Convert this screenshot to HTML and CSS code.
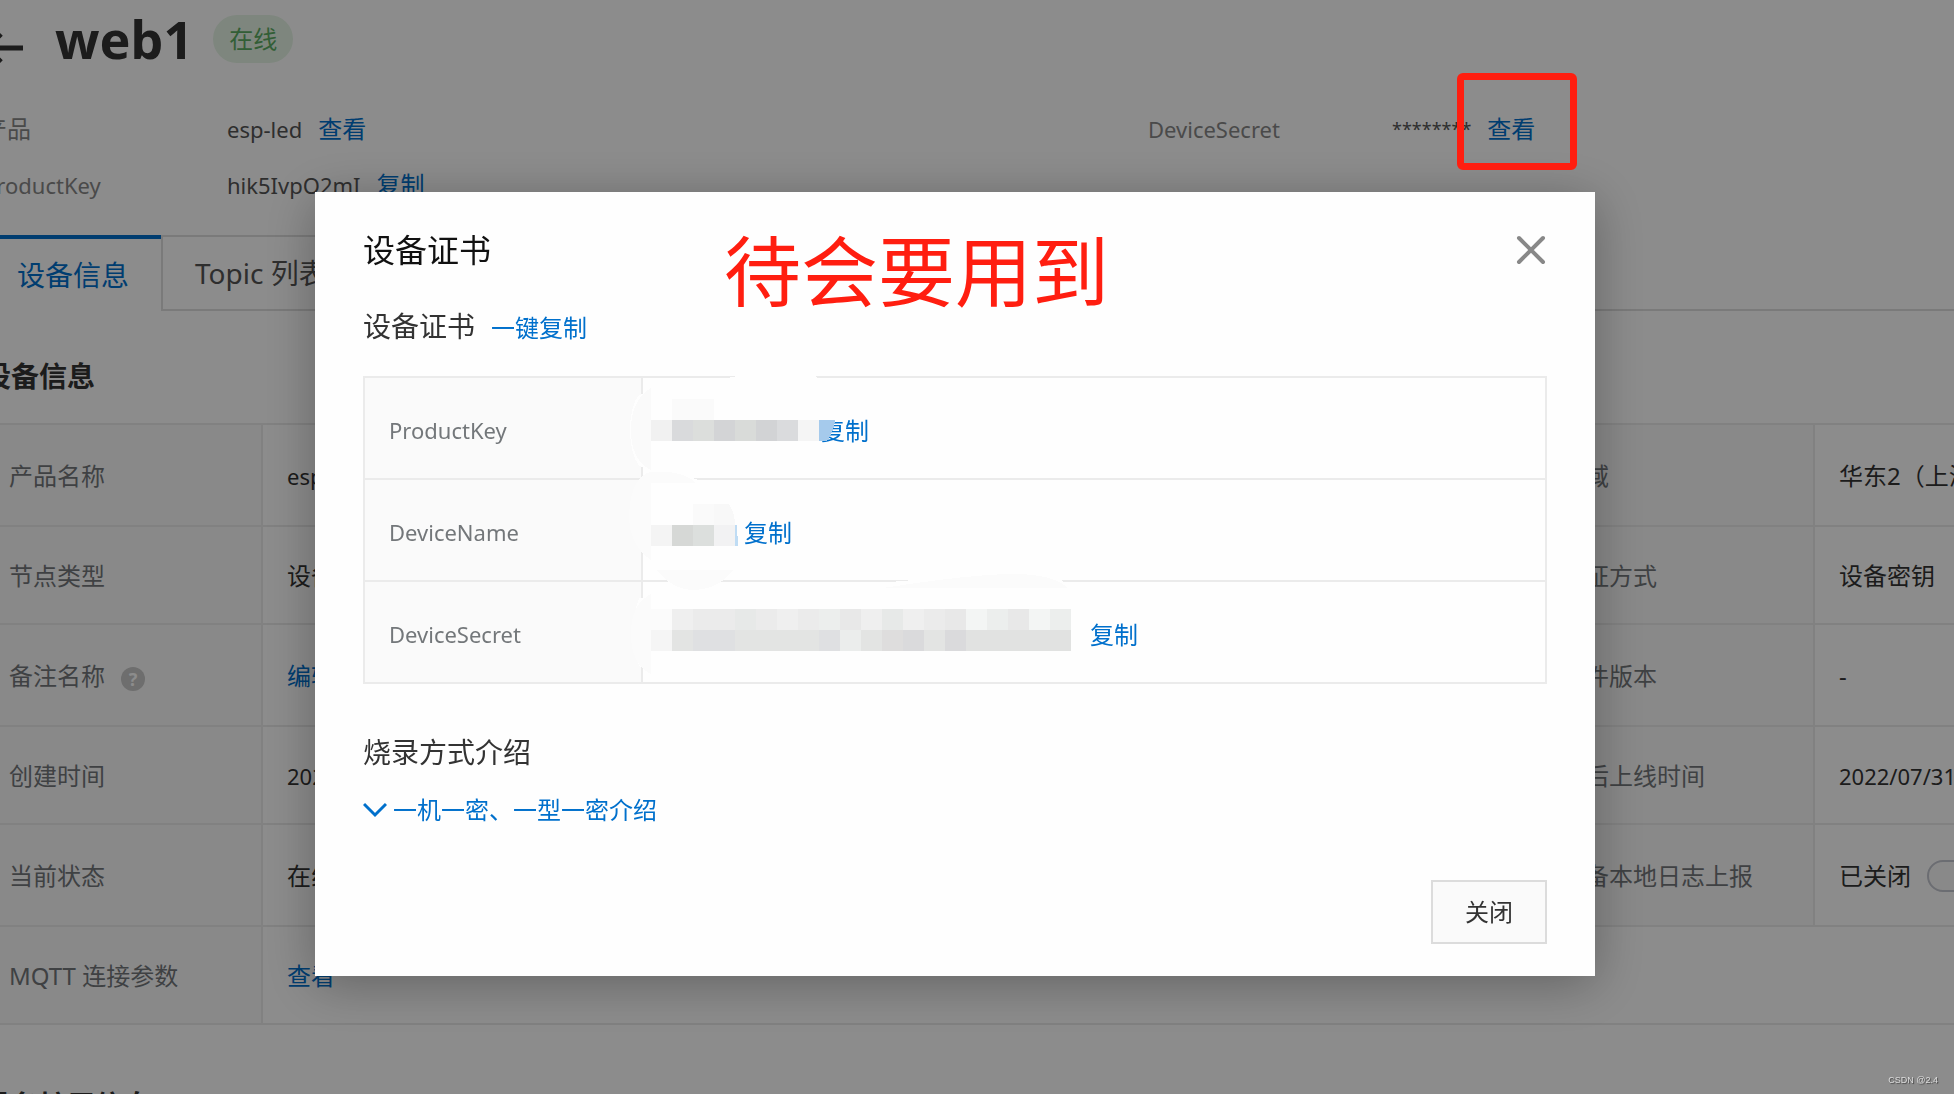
FILE: index.html
```html
<!DOCTYPE html>
<html lang="zh-CN">
<head>
  <meta charset="UTF-8">
  <title>设备详情 - web1</title>
  <link rel="stylesheet" href="styles.css">
</head>
<body>
  <div class="page">
    <div class="page-header">
      <button class="back" aria-label="返回">
        <svg width="40" height="40" viewBox="0 0 40 40" fill="none" stroke="#333" stroke-width="5"><path d="M40 20H5M18 6L4 20l14 14"/></svg>
      </button>
      <h1>web1</h1>
      <span class="badge">在线</span>
    </div>

    <div class="info">
      <div class="info-item"><span class="info-label">产品</span><span class="en">esp-led</span><a href="#">查看</a></div>
      <div class="info-item"><span class="info-label en">DeviceSecret</span><span class="secret">********</span><a href="#">查看</a></div>
      <div class="info-item"><span class="info-label en">ProductKey</span><span class="en">hik5IvpO2mI</span><a href="#">复制</a></div>
    </div>

    <div class="tabs">
      <button class="tab active">设备信息</button>
      <button class="tab">Topic 列表</button>
      <div class="tabs-line"></div>
    </div>

    <h2>设备信息</h2>
    <table class="detail">
      <tr>
        <th>产品名称</th><td class="en">esp-led</td>
        <th></th><td></td>
        <th>地域</th><td>华东2（上海）</td>
      </tr>
      <tr>
        <th>节点类型</th><td>设备</td>
        <th></th><td></td>
        <th>认证方式</th><td>设备密钥</td>
      </tr>
      <tr>
        <th>备注名称<span class="help">?</span></th><td><a href="#">编辑</a></td>
        <th></th><td></td>
        <th>固件版本</th><td>-</td>
      </tr>
      <tr>
        <th>创建时间</th><td class="en">2022/07/31</td>
        <th></th><td></td>
        <th>最后上线时间</th><td class="en">2022/07/31</td>
      </tr>
      <tr>
        <th>当前状态</th><td>在线</td>
        <th></th><td></td>
        <th>设备本地日志上报</th><td><label class="switch">已关闭<input type="checkbox"></label></td>
      </tr>
      <tr>
        <th>MQTT 连接参数</th><td colspan="5"><a href="#">查看</a></td>
      </tr>
    </table>

    <h2 class="next">设备扩展信息</h2>
  </div>

  <div class="overlay">
    <div class="dialog" role="dialog" aria-label="设备证书">
      <div class="dialog-header">
        <div class="dialog-title">设备证书</div>
        <button class="close" aria-label="关闭窗口">
          <svg width="32" height="32" viewBox="0 0 32 32" fill="none" stroke="#888" stroke-width="4" stroke-linecap="round"><path d="M4 4l24 24M28 4L4 28"/></svg>
        </button>
      </div>

      <div class="subtitle">设备证书<a href="#">一键复制</a></div>
      <table class="cert">
        <tr>
          <th class="en">ProductKey</th>
          <td><div class="cell">
            <svg class="mosaic" width="178" height="100" viewBox="0 0 178 100" shape-rendering="crispEdges">
              <path fill="#fefefe" d="M-4 17C-16 30-16 72-4 88L8 91Q60 90 150 76L178 60 192 30 173-2Q150-10 112-5L95-2Q50 6-4 17z"/>
              <path fill="#fafafa" d="M8 10Q-12 22-12 52T8 92zM29 21h42v21H29z"/>
              <path fill="#f1f1f1" d="M8 42h21v21H8z"/>
              <path fill="#d9dadc" d="M29 42h21v21H29z"/>
              <path fill="#dcdedc" d="M50 42h21v21H50z"/>
              <path fill="#d3d4d6" d="M71 42h21v21H71z"/>
              <path fill="#d9dbd9" d="M92 42h21v21H92z"/>
              <path fill="#d2d3d5" d="M113 42h21v21h-21z"/>
              <path fill="#dadbdd" d="M134 42h21v21h-21z"/>
              <path fill="#f5f5f5" d="M155 42h21v21h-21z"/>
              <path fill="#a5caec" d="M176 42h16q-1 12-8 21h-8z"/>
            </svg>
            <a href="#">复制</a>
          </div></td>
        </tr>
        <tr>
          <th class="en">DeviceName</th>
          <td><div class="cell">
            <svg class="mosaic" width="101" height="100" viewBox="0 0 101 100" shape-rendering="crispEdges">
              <path fill="#fefefe" d="M8-8Q-10-2-12 30T8 82Q20 104 45 110Q70 108 84 80L94 60Q94 30 84 20Q60-8 8-8z"/>
              <path fill="#fbfbfb" d="M8-8Q-12-4-14 35Q-14 65 8 80zM8-8Q40-10 53 3H8zM14 90h76Q76 110 48 110 28 108 14 90z"/>
              <path fill="#fafafa" d="M50 24h21v21H50z"/>
              <path fill="#f8f8f8" d="M71 24h15q6 9 6 21H71z"/>
              <path fill="#f4f4f4" d="M8 45h21v21H8z"/>
              <path fill="#d6d8d6" d="M29 45h21v21H29z"/>
              <path fill="#dcdfdd" d="M50 45h21v21H50z"/>
              <path fill="#f2f2f3" d="M71 45h21v21H71z"/>
              <path fill="#bfdcf4" d="M92 45h2l1 21h-3z"/>
            </svg>
            <a href="#">复制</a>
          </div></td>
        </tr>
        <tr>
          <th class="en">DeviceSecret</th>
          <td><div class="cell">
            <svg class="mosaic" width="447" height="100" viewBox="0 0 447 100" shape-rendering="crispEdges">
              <path fill="#fefefe" d="M-4 16Q-16 50-4 84L10 92Q200 90 420 78Q444 62 440 30Q436 14 418-2Q380-8 330-8Q260 0 200 3z"/>
              <path fill="#fbfbfb" d="M8 12Q-12 22-12 52T8 92zM240 6Q330-8 370-8T425 6z"/>
              <g transform="translate(8 27)">
                <path fill="#fbfbfb" d="M0 0h21v21H0z"/>
                <path fill="#f5f5f5" d="M0 21h21v21H0z"/>
                <path fill="#ebebeb" d="M21 0h378v21H21z"/>
                <path fill="#e3e4e3" d="M21 21h378v21H21z"/>
                <path fill="#efefef" d="M21 0h21v21H21zM126 0h21v21h-21zM210 0h21v21h-21zM252 0h21v21h-21z"/>
                <path fill="#e7e9e8" d="M84 0h21v21H84zM231 0h21v21h-21z"/>
                <path fill="#e8e8e8" d="M189 0h21v21h-21zM294 0h21v21h-21zM357 0h21v21h-21z"/>
                <path fill="#f3f5f4" d="M315 0h21v21h-21zM378 0h21v21h-21z"/>
                <path fill="#eceeed" d="M399 0h21v21h-21zM168 0h21v21h-21zM336 0h21v21h-21z"/>
                <path fill="#dfe0e2" d="M42 21h42v21H42zM168 21h21v21h-21z"/>
                <path fill="#ebedec" d="M189 21h21v21h-21z"/>
                <path fill="#dedddd" d="M231 21h21v21h-21z"/>
                <path fill="#dadadc" d="M252 21h21v21h-21zM294 21h21v21h-21z"/>
                <path fill="#e1e2e1" d="M315 21h105v21H315z"/>
              </g>
            </svg>
            <a href="#">复制</a>
          </div></td>
        </tr>
      </table>

      <div class="subtitle intro">烧录方式介绍</div>
      <a class="expand" href="#">
        <svg width="24" height="24" viewBox="0 0 24 24" fill="none" stroke="#0070cc" stroke-width="3"><path d="M1 6l11 11L23 6"/></svg>
        一机一密、一型一密介绍
      </a>

      <div class="dialog-footer">
        <button class="btn">关闭</button>
      </div>
    </div>
  </div>

  <div class="mark-box"></div>
  <div class="mark-text">待会要用到</div>
  <div class="watermark">CSDN @2.4</div>
</body>
</html>
```
FILE: styles.css
```css
* {
  box-sizing: border-box;
}
body {
  margin: 0;
  height: 100vh;
  position: relative;
  overflow: hidden;
  background: #fff;
  color: #333;
  font-family: "Noto Sans", "Noto Sans CJK SC", sans-serif;
  font-size: 24px;
  line-height: 36px;
}
a {
  color: #0070cc;
  text-decoration: none;
}
button {
  font-family: inherit;
  font-size: inherit;
  line-height: inherit;
  color: inherit;
  cursor: pointer;
}
.en {
  font-size: 22px;
}

/* page */
.page {
  min-width: 2330px;
  margin-left: -17px;
}
.page-header {
  display: flex;
  align-items: center;
  height: 78px;
}
.back {
  display: flex;
  padding: 18px 0 0;
  border: none;
  background: none;
}
h1 {
  margin: 0 20px 0 32px;
  font-size: 52px;
  line-height: 78px;
}
.badge {
  padding: 6px 16px;
  border-radius: 24px;
  background: #e5f5e5;
  color: #5cab63;
}
.info {
  display: grid;
  grid-template-columns: 1fr 1fr;
  margin-top: 23px;
  color: #555;
}
.info-item {
  display: flex;
  align-items: center;
  height: 56px;
}
.info-item a {
  margin-left: 16px;
}
.info-label {
  width: 244px;
  color: #888;
}
.secret {
  font-size: 18px;
}
.tabs {
  display: flex;
  margin-top: 22px;
}
.tab {
  height: 76px;
  padding: 0 32px;
  border: 2px solid #dedede;
  border-right: none;
  background: #fff;
  color: #555;
  font-size: 28px;
}
.tab.active {
  border-top: 4px solid #0070cc;
  border-bottom: none;
  color: #0070cc;
}
.tabs-line {
  flex: 1;
  border-left: 2px solid #dedede;
  border-bottom: 2px solid #dedede;
}
h2 {
  margin: 45px 0 27px;
  font-size: 28px;
  line-height: 40px;
}
h2.next {
  margin-top: 60px;
}
.detail, .cert {
  width: 100%;
  border-collapse: collapse;
  table-layout: fixed;
}
.detail th, .detail td {
  height: 98px;
  padding: 2px 24px 0;
  border: 2px solid #ebebeb;
  text-align: left;
  font-weight: normal;
}
.detail tr:nth-child(odd) th, .detail tr:nth-child(odd) td {
  height: 102px;
}
.detail th {
  width: 278px;
  background: #fafafa;
  color: #73777a;
}
.help {
  display: inline-block;
  width: 24px;
  height: 24px;
  margin-left: 16px;
  border-radius: 50%;
  background: #c8c8c8;
  color: #fff;
  font-size: 18px;
  font-weight: bold;
  line-height: 24px;
  text-align: center;
  vertical-align: middle;
}
.switch {
  display: flex;
  align-items: center;
  gap: 16px;
}
.switch input {
  appearance: none;
  width: 64px;
  height: 32px;
  margin: 0;
  border: 2px solid #c4c6cf;
  border-radius: 16px;
  background: #fafafa;
}

/* dialog */
.overlay {
  position: fixed;
  inset: 0;
  display: flex;
  justify-content: center;
  align-items: flex-start;
  padding: 192px 44px 0 0;
  background: rgba(0, 0, 0, 0.45);
}
.dialog {
  width: 1280px;
  padding: 32px 48px;
  background: #fefefe;
  box-shadow: 0 8px 48px rgba(0, 0, 0, 0.3);
}
.dialog-header {
  display: flex;
  justify-content: space-between;
  align-items: center;
  height: 52px;
}
.dialog-title {
  font-size: 32px;
  color: #111;
}
.close {
  display: flex;
  padding: 0;
  border: none;
  background: none;
}
.subtitle {
  display: flex;
  align-items: baseline;
  gap: 16px;
  margin: 30px 0 28px;
  font-size: 28px;
  line-height: 40px;
}
.subtitle a {
  font-size: 24px;
}
.cert th, .cert td {
  height: 102px;
  padding: 0;
  border: 2px solid #ebebeb;
  text-align: left;
  font-weight: normal;
}
.cert th {
  width: 278px;
  padding: 4px 24px 0;
  background: #fafafa;
  color: #73777a;
}
.cell {
  display: flex;
  align-items: center;
}
.cell a {
  padding-top: 6px;
}
.mosaic {
  flex: none;
  position: relative;
  z-index: 1;
  overflow: visible;
}
.intro {
  margin: 48px 0 20px;
}
.expand {
  display: flex;
  align-items: center;
  gap: 6px;
}
.dialog-footer {
  display: flex;
  justify-content: flex-end;
  margin-top: 52px;
}
.btn {
  width: 116px;
  height: 64px;
  padding: 0;
  border: 2px solid #dcdcdc;
  background: #fafafa;
}

/* annotations */
.mark-box {
  position: absolute;
  left: 1457px;
  top: 73px;
  width: 120px;
  height: 97px;
  border: 7px solid #ff1e10;
  border-radius: 6px;
}
.mark-text {
  position: absolute;
  left: 724px;
  top: 222px;
  color: #ff1e10;
  font-size: 77px;
  line-height: 100px;
}
.watermark {
  position: absolute;
  right: 16px;
  bottom: 6px;
  color: #ddd;
  font-family: "Liberation Sans", sans-serif;
  font-size: 9px;
  line-height: 16px;
  text-shadow: 1px 1px 1px #444;
}
```
